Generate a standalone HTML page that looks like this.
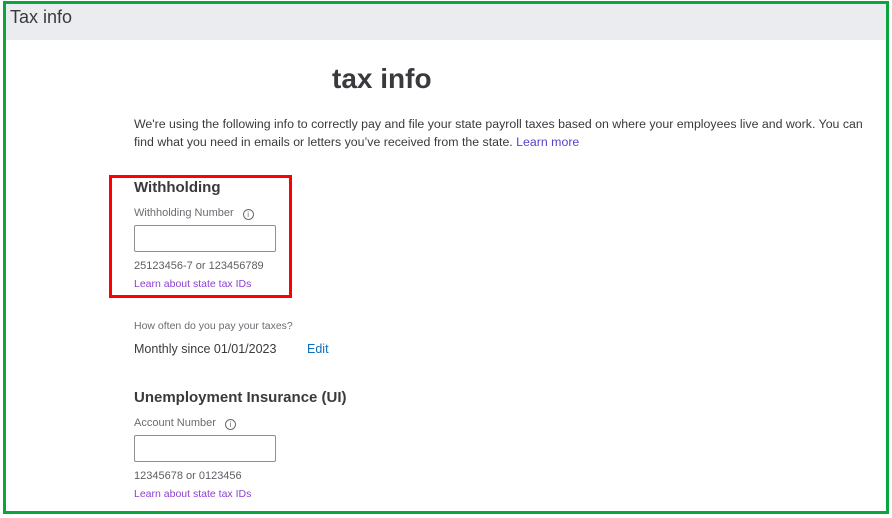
<!DOCTYPE html>
<html><head><meta charset="utf-8"><style>
*{margin:0;padding:0;box-sizing:border-box}
body{width:892px;height:518px;background:#fff;font-family:"Liberation Sans",sans-serif;color:#393a3d;position:relative;overflow:hidden}
.frame{position:absolute;left:3px;top:1px;width:886px;height:513px;border:3px solid #0aa53c}
.hdr{position:absolute;left:6px;top:4px;width:880px;height:36px;background:#ebecef}
.a{position:absolute;white-space:nowrap}
.lbl{font-size:11px;color:#6b6c72}
.lnk{font-size:10.5px;color:#8d3fd1}
.inp{position:absolute;left:134px;width:142px;height:27px;border:1px solid #8d9096;border-radius:2px}
.i{display:inline-block;width:11px;height:11px;border:1px solid #6b6c72;border-radius:50%;font-size:8px;text-align:center;line-height:9px;vertical-align:-1px;margin-left:9px}
.red{position:absolute;left:109px;top:175px;width:183px;height:123px;border:3px solid #f00}
</style></head><body>
<div class="frame"></div>
<div class="hdr"></div>
<div class="a" style="left:10px;top:7px;font-size:18px;color:#393a3d">Tax info</div>
<div class="a" style="left:332px;top:63px;font-size:28px;font-weight:bold;color:#393a3d">tax info</div>
<div class="a" style="left:134px;top:115px;font-size:12.35px;line-height:18px;color:#393a3d">We're using the following info to correctly pay and file your state payroll taxes based on where your employees live and work. You can<br>find what you need in emails or letters you’ve received from the state. <span style="color:#5a3fc9">Learn more</span></div>
<div class="red"></div>
<div class="a" style="left:134px;top:179px;font-size:15px;font-weight:bold;color:#393a3d">Withholding</div>
<div class="a lbl" style="left:134px;top:207px">Withholding Number<span class="i">i</span></div>
<div class="inp" style="top:225px"></div>
<div class="a lbl" style="left:134px;top:260px;color:#5d5e63">25123456-7 or 123456789</div>
<div class="a lnk" style="left:134px;top:278px">Learn about state tax IDs</div>
<div class="a lbl" style="left:134px;top:320px;font-size:10.5px">How often do you pay your taxes?</div>
<div class="a" style="left:134px;top:342px;font-size:12.5px">Monthly since 01/01/2023</div>
<div class="a" style="left:307px;top:342px;font-size:12.5px;color:#0d6ebd">Edit</div>
<div class="a" style="left:134px;top:389px;font-size:15px;font-weight:bold;color:#393a3d">Unemployment Insurance (UI)</div>
<div class="a lbl" style="left:134px;top:417px">Account Number<span class="i">i</span></div>
<div class="inp" style="top:435px"></div>
<div class="a lbl" style="left:134px;top:470px;color:#5d5e63">12345678 or 0123456</div>
<div class="a lnk" style="left:134px;top:488px">Learn about state tax IDs</div>
</body></html>
